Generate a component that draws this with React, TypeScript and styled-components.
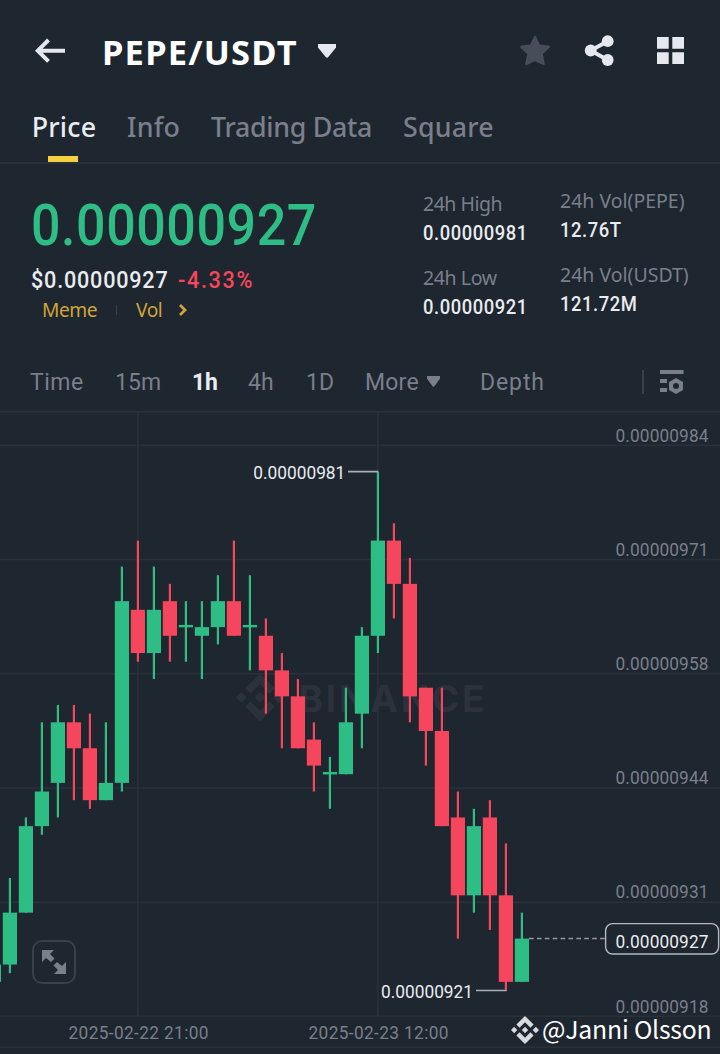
import React from "react";
import styled, { createGlobalStyle, css } from "styled-components";

const color = {
  bg: "#1e2630",
  line: "#29303a",
  text: "#eaecef",
  muted: "#7a7f8b",
  green: "#2ebd85",
  red: "#f6465d",
  yellow: "#f5d142",
  gold: "#cfa43a",
};

const digits = `Roboto, "Liberation Sans", sans-serif`;
const label = `"Noto Sans", Roboto, sans-serif`;

const SQUEEZE = 0.92;

const condensed = css`
  display: block;
  transform: scaleX(${SQUEEZE});
  transform-origin: left center;
`;

const Global = createGlobalStyle`
  * { box-sizing: border-box; }
  body { margin: 0; background: ${color.bg}; }
`;

const Screen = styled.main`
  position: relative;
  display: flex;
  flex-direction: column;
  width: 720px;
  height: 1054px;
  overflow: hidden;
  background: ${color.bg};
  color: ${color.text};
  font-family: ${digits};
  white-space: nowrap;
`;

const Header = styled.header`
  display: flex;
  align-items: center;
  height: 102px;
  padding: 0 36px 0 34px;
`;

const Pair = styled.h1`
  margin: 1px 17px 0 36px;
  width: 199px;
  font: 700 34.5px/40px ${label};
  letter-spacing: 1.2px;
  color: #fff;
`;

const HeaderActions = styled.div`
  display: flex;
  align-items: center;
  gap: 32px;
  margin-left: auto;
`;

const GridIcon = styled.svg`
  margin-left: 10px;
`;

const Tabs = styled.nav`
  display: flex;
  height: 62px;
  padding-left: 32px;
  border-bottom: 2px solid ${color.line};
`;

const Tab = styled.a<{ $active?: boolean; $width: number; $spacing: number }>`
  display: flex;
  flex-direction: column;
  justify-content: space-between;
  align-items: center;
  width: ${(p) => p.$width}px;
  margin-right: 31px;
  font: 500 26.8px/50px ${label};
  letter-spacing: ${(p) => p.$spacing}px;
  color: ${(p) => (p.$active ? color.text : color.muted)};
`;

const Underline = styled.span`
  width: 30px;
  height: 6px;
  margin-right: 2px;
  background: ${color.yellow};
`;

const Summary = styled.section`
  display: flex;
  height: 188px;
  padding-left: 31px;
`;

const PriceBlock = styled.div`
  width: 392px;
  padding-top: 29px;
`;

const LastPrice = styled.div`
  ${condensed}
  font: 500 56.5px/66px ${digits};
  letter-spacing: 0.6px;
  color: ${color.green};
`;

const FiatRow = styled.div`
  display: flex;
  padding-top: 6px;
  font: 500 23.5px/30px ${digits};
`;

const FiatPrice = styled.span`
  ${condensed}
  width: 147px;
  letter-spacing: 0.85px;
`;

const Change = styled.span`
  ${condensed}
  letter-spacing: 1.8px;
  color: ${color.red};
`;

const TagRow = styled.div`
  display: flex;
  align-items: center;
  padding: 0 0 0 11px;
  font: 400 19.2px/30px ${label};
  letter-spacing: -0.5px;
  color: ${color.gold};
`;

const TagDivider = styled.span`
  width: 1px;
  height: 10px;
  margin: 0 19px 0 19px;
  background: #3b424d;
`;

const Stats = styled.div<{ $width: number; $top: number }>`
  display: flex;
  flex-direction: column;
  gap: 16px;
  width: ${(p) => p.$width}px;
  padding-top: ${(p) => p.$top}px;
`;

const Stat = styled.div`
  display: flex;
  flex-direction: column;
`;

const StatLabel = styled.span<{ $spacing?: number }>`
  font: 400 19.5px/28px ${label};
  letter-spacing: ${(p) => p.$spacing ?? 0}px;
  color: ${color.muted};
`;

const StatValue = styled.span`
  ${condensed}
  font: 500 20px/30px ${digits};
  letter-spacing: 0.6px;
`;

const Intervals = styled.nav`
  display: flex;
  align-items: center;
  height: 59px;
  padding: 3px 35px 0 30px;
`;

const Interval = styled.a<{ $active?: boolean; $width: number; $spacing: number }>`
  display: flex;
  align-items: center;
  gap: 8px;
  width: ${(p) => p.$width}px;
  font: ${(p) => (p.$active ? 700 : 400)} 23px/30px ${digits};
  letter-spacing: ${(p) => p.$spacing}px;
  color: ${(p) => (p.$active ? color.text : color.muted)};

  svg {
    margin-bottom: 4px;
  }
`;

const ChartTools = styled.div`
  display: flex;
  align-items: center;
  gap: 16px;
  margin: 0 1px 3px auto;
`;

const ToolDivider = styled.span`
  width: 2px;
  height: 24px;
  background: #39404b;
`;

const Chart = styled.svg`
  display: block;
  flex: none;
`;

const ExpandButton = styled.button`
  position: absolute;
  left: 32px;
  top: 940px;
  display: flex;
  align-items: center;
  justify-content: center;
  width: 44px;
  height: 44px;
  padding: 0;
  border: 2px solid #39404b;
  border-radius: 10px;
  background: ${color.bg};
`;

const Signature = styled.div`
  position: absolute;
  left: 511px;
  top: 1010px;
  display: flex;
  align-items: center;
  gap: 3px;
  height: 40px;
`;

const SignatureName = styled.span`
  margin-top: -4px;
  font: 400 24.8px/30px "Noto Sans CJK SC", sans-serif;
  letter-spacing: -0.2px;
  color: #fff;
`;

type Candle = [open: number, close: number, high: number, low: number];

const candles: Candle[] = [
  [922, 924, 924, 922],
  [924, 930, 934, 923],
  [930, 940, 941, 930],
  [940, 944, 952, 939],
  [945, 952, 954, 941],
  [952, 949, 954, 943],
  [949, 943, 953, 942],
  [943, 945, 952, 943],
  [945, 966, 970, 944],
  [965, 960, 973, 959],
  [960, 965, 970, 957],
  [966, 962, 968, 959],
  [963, 963, 966, 959],
  [962, 963, 966, 957],
  [963, 966, 969, 961],
  [966, 962, 973, 962],
  [963, 963, 969, 958],
  [962, 958, 964, 953],
  [958, 955, 960, 949],
  [955, 949, 957, 949],
  [950, 947, 952, 944],
  [946, 946, 948, 942],
  [946, 952, 956, 946],
  [953, 962, 963, 949],
  [962, 973, 981, 960],
  [973, 968, 975, 964],
  [968, 955, 971, 952],
  [956, 951, 956, 947],
  [951, 940, 956, 940],
  [941, 932, 944, 927],
  [932, 940, 942, 930],
  [941, 932, 943, 928],
  [932, 922, 938, 921],
  [922, 927, 930, 922],
];

const TOP = 411;
const yOf = (price: number) => 938.6 - TOP - (price - 927) * 8.652;

const gridRows = [
  { y: 445.4, price: "0.00000984" },
  { y: 559.5, price: "0.00000971" },
  { y: 673.7, price: "0.00000958" },
  { y: 788, price: "0.00000944" },
  { y: 902.2, price: "0.00000931" },
  { y: 1016.3, price: "0.00000918" },
];

const BinanceMark = ({ size, fill }: { size: number; fill: string }) => (
  <svg width={size} height={size} viewBox="0 0 126.61 126.61" fill={fill}>
    <path d="M38.73 53.2 63.3 28.63 87.88 53.21 102.17 38.91 63.3 0 24.44 38.9zM0 63.31 14.3 49.01 28.59 63.31 14.3 77.6zM38.73 73.41 63.3 97.98 87.88 73.4 102.18 87.69 63.3 126.61 24.42 87.71zM98.02 63.31 112.31 49.01 126.61 63.3 112.31 77.6zM77.8 63.3 63.3 48.79 48.79 63.3 63.3 77.8z" />
  </svg>
);

type PriceTextProps = { x: number; y: number; children: string; fill: string; w?: number };

const PriceText = ({ x, y, children, fill, w = 92 }: PriceTextProps) => (
  <text
    transform={`translate(${x} ${y}) scale(${SQUEEZE} 1)`}
    fill={fill}
    fontSize="18.8"
    fontFamily={digits}
    textLength={w / SQUEEZE}
    lengthAdjust="spacing"
  >
    {children}
  </text>
);

const CandleChart = () => (
  <Chart width="720" height="643" viewBox="0 0 720 643">
    <g stroke={color.line} strokeWidth="1.6">
      <path d="M0 .9H720M0 636.3H720M137.8 0V605M377.8 0V605" />
      {gridRows.map((r) => (
        <path key={r.y} d={`M0 ${r.y - TOP}H720`} />
      ))}
    </g>
    <g fill="#2b323c">
      <g transform="translate(236 262.5)">
        <BinanceMark size={48} fill="#2b323c" />
      </g>
      <text x="298.5" y="300.5" fontFamily="Inter, sans-serif" fontWeight="700" fontSize="37" textLength="186">
        BINANCE
      </text>
    </g>
    {candles.map(([open, close, high, low], i) => {
      const x = 9.9 + (i - 1) * 16;
      const fill = close >= open ? color.green : color.red;
      const top = yOf(Math.max(open, close));
      const height = Math.abs(open - close) * 8.652;
      return (
        <g key={i} fill={fill}>
          <rect x={x - 1.1} y={yOf(high)} width="2.2" height={yOf(low) - yOf(high)} />
          <rect x={x - 7.1} y={height ? top : top - 2.2} width="14.2" height={height || 2.4} />
        </g>
      );
    })}
    <path d="M348 60.6H378M476 579.5H506.5" stroke="#a9aeb8" strokeWidth="1.7" />
    <path d="M529 527.5H605" stroke="#959aa5" strokeWidth="1.6" strokeDasharray="4.6 3.3" />
    <rect x="605.6" y="512.6" width="113" height="30.4" rx="7" fill={color.bg} stroke="#b4b9c3" strokeWidth="1.4" />
    {gridRows.map((r) => (
      <PriceText key={r.price} x={615.5} y={r.y - TOP - 3.8} fill={color.muted} w={93}>
        {r.price}
      </PriceText>
    ))}
    <PriceText x={615.5} y={536.6} fill={color.text} w={93}>0.00000927</PriceText>
    <PriceText x={253.3} y={67.6} fill={color.text}>0.00000981</PriceText>
    <PriceText x={381} y={586.7} fill={color.text}>0.00000921</PriceText>
    <PriceText x={68.5} y={627.6} fill={color.muted} w={140}>2025-02-22 21:00</PriceText>
    <PriceText x={308.5} y={627.6} fill={color.muted} w={140}>2025-02-23 12:00</PriceText>
  </Chart>
);

const Caret = ({ width, height, fill }: { width: number; height: number; fill: string }) => (
  <svg width={width} height={height} viewBox="0 0 18 14" preserveAspectRatio="none" fill={fill}>
    <path d="M0 0H18V3.5L10.5 12.8Q9 14.6 7.5 12.8L0 3.5Z" />
  </svg>
);

export default function App() {
  return (
    <Screen>
      <Global />
      <Header>
        <svg width="32" height="26" viewBox="0 0 32 26" fill="none" stroke="#e6e8f0" strokeWidth="4">
          <path d="M31 12.7H4M14.5 2 3.8 12.7 14.5 23.4" />
        </svg>
        <Pair>PEPE/USDT</Pair>
        <Caret width={18} height={14} fill="#e6e8f0" />
        <HeaderActions>
          <svg width="32" height="32" viewBox="0 0 32 32" fill="#474d59" stroke="#474d59" strokeWidth="2.4" strokeLinejoin="round">
            <path d="M16 2 20 10.8 29.7 11.8 22.5 18.6 24.6 28.9 16 24.8 7.4 28.9 9.5 18.6 2.3 11.8 12 10.8Z" />
          </svg>
          <svg width="32" height="32" viewBox="0 0 32 32" fill="#e6e8f0">
            <path d="M24.7 6.2 7.7 15.5 24.7 25" fill="none" stroke="#e6e8f0" strokeWidth="4" />
            <circle cx="24.7" cy="6.2" r="5.9" />
            <circle cx="7.7" cy="15.5" r="5.9" />
            <circle cx="24.7" cy="25" r="5.9" />
          </svg>
          <GridIcon width="27" height="28" viewBox="0 0 27 28" fill="#e6e8f0">
            <path d="M0 0H11.7V11.7H0ZM15.3 0H27V11.7H15.3ZM0 15.3H11.7V27H0ZM15.3 15.3H27V27H15.3Z" />
          </GridIcon>
        </HeaderActions>
      </Header>
      <Tabs>
        <Tab $active $width={64} $spacing={0.2}>Price<Underline /></Tab>
        <Tab $width={53} $spacing={0.2}>Info</Tab>
        <Tab $width={161} $spacing={-0.3}>Trading Data</Tab>
        <Tab $width={91} $spacing={0.2}>Square</Tab>
      </Tabs>
      <Summary>
        <PriceBlock>
          <LastPrice>0.00000927</LastPrice>
          <FiatRow>
            <FiatPrice>$0.00000927</FiatPrice>
            <Change>-4.33%</Change>
          </FiatRow>
          <TagRow>
            <span>Meme</span>
            <TagDivider />
            <span>Vol</span>
            <svg width="28" height="14" viewBox="0 0 28 14" fill="none" stroke={color.gold} strokeWidth="2.8">
              <path d="M18 2 23 7 18 12" />
            </svg>
          </TagRow>
        </PriceBlock>
        <Stats $width={137} $top={26}>
          <Stat>
            <StatLabel $spacing={-0.5}>24h High</StatLabel>
            <StatValue>0.00000981</StatValue>
          </Stat>
          <Stat>
            <StatLabel $spacing={-0.4}>24h Low</StatLabel>
            <StatValue>0.00000921</StatValue>
          </Stat>
        </Stats>
        <Stats $width={150} $top={23}>
          <Stat>
            <StatLabel>24h Vol(PEPE)</StatLabel>
            <StatValue>12.76T</StatValue>
          </Stat>
          <Stat>
            <StatLabel>24h Vol(USDT)</StatLabel>
            <StatValue>121.72M</StatValue>
          </Stat>
        </Stats>
      </Summary>
      <Intervals>
        <Interval $width={85} $spacing={0.5}>Time</Interval>
        <Interval $width={77} $spacing={0.1}>15m</Interval>
        <Interval $active $width={56} $spacing={-0.3}>1h</Interval>
        <Interval $width={58} $spacing={0}>4h</Interval>
        <Interval $width={59} $spacing={0}>1D</Interval>
        <Interval $width={115} $spacing={0.2}>
          More <Caret width={13} height={11} fill={color.muted} />
        </Interval>
        <Interval $width={70} $spacing={0.9}>Depth</Interval>
        <ChartTools>
          <ToolDivider />
          <svg width="24" height="24" viewBox="0 0 24 24" fill={color.muted}>
            <path d="M0 0H23.5V4H0ZM0 9H7V13H0ZM0 18H7V22H0Z" />
            <path fillRule="evenodd" d="M16 8 23 12V20L16 24 9 20V12ZM16 13A3 3 0 1 0 16 19A3 3 0 1 0 16 13Z" />
          </svg>
        </ChartTools>
      </Intervals>
      <CandleChart />
      <ExpandButton aria-label="Expand chart">
        <svg width="26" height="26" viewBox="0 0 26 26" fill={color.muted}>
          <path d="M1 1H13L9 5 13.5 9.5 10 13 5 9 1 13ZM25 25H13L17 21 12.5 16.5 16 13 21 17 25 13Z" />
        </svg>
      </ExpandButton>
      <Signature>
        <BinanceMark size={28} fill="#d8dadd" />
        <SignatureName>@Janni Olsson</SignatureName>
      </Signature>
    </Screen>
  );
}
